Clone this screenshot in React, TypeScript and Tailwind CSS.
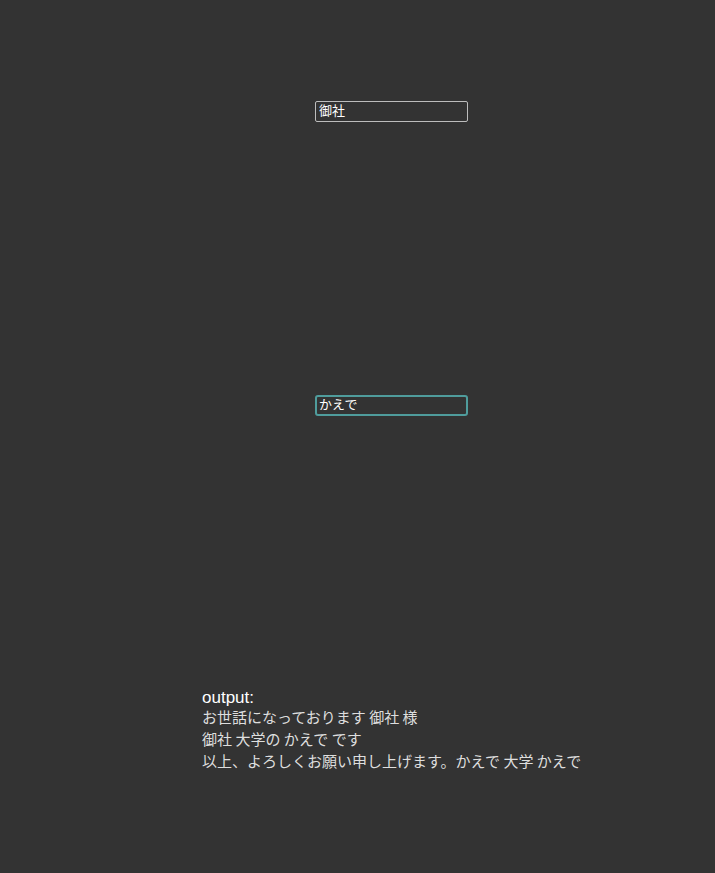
import { useState } from 'react';

export default function App() {
  const [company, setCompany] = useState('御社');
  const [name, setName] = useState('かえで');

  return (
    <div
      className="min-h-[873px] w-full bg-[#333333] text-white"
      style={{ fontFamily: '"Noto Sans CJK JP", "Noto Sans", sans-serif' }}
    >
      <div className="flex flex-col pl-[202px] pt-[101px]">
        <input
          value={company}
          onChange={(e) => setCompany(e.target.value)}
          className="ml-[113px] h-[21px] w-[153px] rounded-[2px] border border-[#bdbdbd] bg-transparent px-[3px] pb-[5px] text-[13px] leading-none text-white outline-none"
        />
        <input
          autoFocus
          value={name}
          onChange={(e) => setName(e.target.value)}
          className="ml-[113px] mt-[273px] h-[21px] w-[153px] rounded-[3px] border-2 border-[#4f9c9c] bg-transparent px-[2px] pb-[4px] text-[13px] leading-none text-white outline-none"
        />
        <div className="mt-[274px] flex flex-col">
          <div
            className="text-[17px] leading-[16px] text-white"
            style={{ fontFamily: '"Liberation Sans", "Noto Sans CJK JP", sans-serif' }}
          >
            output:
          </div>
          <div className="text-[15px] leading-[22px] text-[#dedede]">
            <p>お世話になっております {company} 様</p>
            <p>{company} 大学の {name} です</p>
            <p>以上、よろしくお願い申し上げます。{name} 大学 {name}</p>
          </div>
        </div>
      </div>
    </div>
  );
}
